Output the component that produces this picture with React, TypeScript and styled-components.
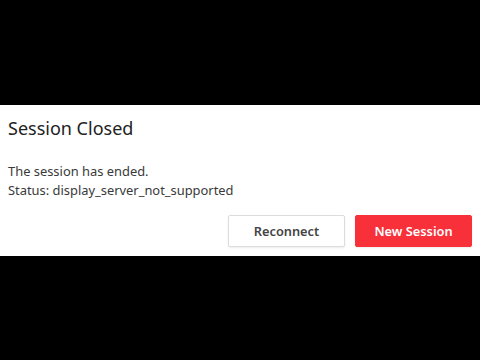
import React from "react"
import styled, { createGlobalStyle } from "styled-components"

const GlobalStyle = createGlobalStyle`
	html, body {
		margin: 0;
		padding: 0;
		background: #000;
	}
	#root {
		height: 360px;
		width: 480px;
	}
`

const Screen = styled.div`
	height: 100%;
	width: 100%;
	display: flex;
	flex-direction: column;
	justify-content: center;
	background: #000;
`

const Dialog = styled.div`
	background: #fff;
	height: 151px;
	box-sizing: border-box;
	padding: 11px 8px 9px 8px;
	display: flex;
	flex-direction: column;
	font-family: "Noto Sans", "Open Sans", sans-serif;
`

const Title = styled.div`
	font-size: 18px;
	line-height: 24px;
	color: #222;
`

const Message = styled.div`
	margin-top: 22px;
	font-size: 12.9px;
	line-height: 19px;
	color: #3a3a3a;
`

const Actions = styled.div`
	margin-top: auto;
	display: flex;
	justify-content: flex-end;
	gap: 10px;
`

const Button = styled.button<{ $primary?: boolean }>`
	width: 117px;
	height: 32px;
	border-radius: 2px;
	font-family: "Noto Sans", "Open Sans", sans-serif;
	font-size: 12.8px;
	font-weight: 600;
	cursor: pointer;
	border: 1px solid ${(p) => (p.$primary ? "#f7303a" : "#dcdcdc")};
	background: ${(p) => (p.$primary ? "#f7303a" : "#fff")};
	color: ${(p) => (p.$primary ? "#fff" : "#444")};
	box-shadow: 0 1px 2px rgba(0, 0, 0, 0.08);
`

export default function App() {
	return (
		<Screen>
			<GlobalStyle />
			<Dialog>
				<Title>Session Closed</Title>
				<Message>
					The session has ended.
					<br />
					Status: display_server_not_supported
				</Message>
				<Actions>
					<Button>Reconnect</Button>
					<Button $primary>New Session</Button>
				</Actions>
			</Dialog>
		</Screen>
	)
}
